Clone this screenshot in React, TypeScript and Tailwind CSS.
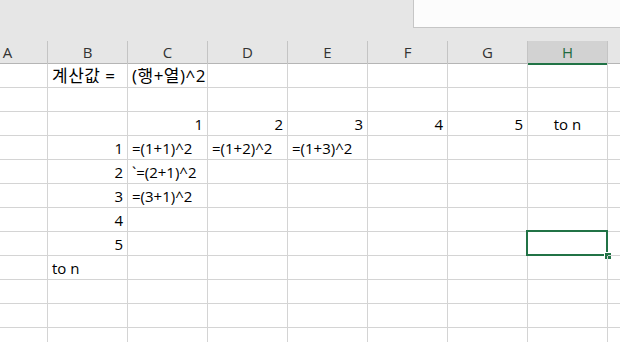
import React from 'react';

type Cell = { text: string; align?: 'left' | 'right' | 'center'; big?: boolean };

const cols = ['A', 'B', 'C', 'D', 'E', 'F', 'G', 'H', 'I'];

// rows of the sheet, keyed by column letter
const rows: Record<string, Cell>[] = [
    { B: { text: '계산값 =', big: true }, C: { text: '(행+열)^2', big: true } },
    {},
    {
        C: { text: '1', align: 'right' },
        D: { text: '2', align: 'right' },
        E: { text: '3', align: 'right' },
        F: { text: '4', align: 'right' },
        G: { text: '5', align: 'right' },
        H: { text: 'to n', align: 'center' },
    },
    {
        B: { text: '1', align: 'right' },
        C: { text: '=(1+1)^2' },
        D: { text: '=(1+2)^2' },
        E: { text: '=(1+3)^2' },
    },
    { B: { text: '2', align: 'right' }, C: { text: '`=(2+1)^2' } },
    { B: { text: '3', align: 'right' }, C: { text: '=(3+1)^2' } },
    { B: { text: '4', align: 'right' } },
    { B: { text: '5', align: 'right' } },
    { B: { text: 'to n' } },
    {},
    {},
    {},
];

const alignClass = {
    left: 'justify-start pl-[4px]',
    right: 'justify-end pr-[4px]',
    center: 'justify-center',
};

export default function App() {
    return (
        <div
            className="w-[620px] h-[342px] bg-white overflow-hidden text-black"
            style={{ fontFamily: '"Open Sans", "Noto Sans CJK KR", sans-serif' }}
        >
            <div className="flex h-[41px] bg-[#e6e6e6]">
                <div className="flex-1" />
                <div className="w-[207px] h-[28px] bg-[#fcfcfc] border-l border-b border-[#c6c6c6]" />
            </div>

            <div className="-ml-[32px]">
                <div className="grid grid-cols-[repeat(9,80px)] h-[23px] bg-[#e6e6e6] border-b border-[#b5b5b5]">
                    {cols.map((c) => (
                        <div
                            key={c}
                            className={`relative flex items-center justify-center text-[15px] border-r border-[#c4c4c4] ${c === 'H' ? 'bg-[#d2d2d2] text-[#1e6b3f]' : 'text-[#333]'}`}
                        >
                            {c === 'I' ? '' : c}
                            {c === 'H' && <div className="absolute left-0 right-0 -bottom-[1px] h-[2px] bg-[#217346]" />}
                        </div>
                    ))}
                </div>

                {rows.map((row, r) => (
                    <div key={r} className="grid grid-cols-[repeat(9,80px)] h-[24px]">
                        {cols.map((c) => {
                            const cell = row[c];
                            const selected = r === 7 && c === 'H';
                            return (
                                <div
                                    key={c}
                                    className={`relative flex items-end pb-[1px] leading-[20px] whitespace-nowrap border-r border-b border-[#d4d4d4] ${cell?.big ? 'text-[17px] tracking-[0.5px]' : 'text-[15px]'} ${alignClass[cell?.align ?? 'left']}`}
                                >
                                    {cell?.text}
                                    {selected && (
                                        <>
                                            <div className="absolute -left-[2px] -top-[2px] -right-[1px] -bottom-[1px] border-2 border-[#217346]" />
                                            <div className="absolute -right-[4px] -bottom-[4px] w-[7px] h-[7px] bg-[#217346] border-l border-t border-white" />
                                        </>
                                    )}
                                </div>
                            );
                        })}
                    </div>
                ))}
            </div>
        </div>
    );
}
